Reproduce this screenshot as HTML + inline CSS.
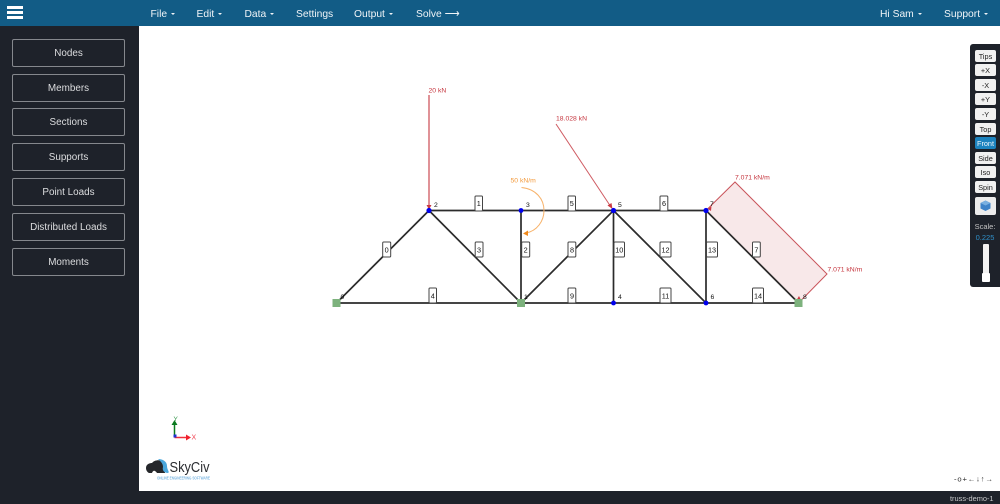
<!DOCTYPE html>
<html><head><meta charset="utf-8"><style>
html,body{margin:0;padding:0;width:1000px;height:504px;overflow:hidden;background:#fff;font-family:"Liberation Sans",sans-serif}
#wrap{position:absolute;left:0;top:0;width:1000px;height:504px;overflow:hidden;filter:blur(.3px)}
.a{position:absolute}
#top{left:0;top:0;width:1000px;height:26px;background:#125c86}
#side{left:0;top:26px;width:138.5px;height:478px;background:#1e222a}
#bot{left:0;top:491px;width:1000px;height:13px;background:#1e222a}
.bar{left:7px;width:16px;height:3px;background:#fff}
.m{top:7.8px;color:#f0f4f7;font-size:10.3px;line-height:13px;white-space:nowrap}
.c{display:inline-block;margin-left:4px;vertical-align:2px;border-left:2px solid transparent;border-right:2px solid transparent;border-top:2px solid #f0f4f7}
.b{left:12px;width:111px;height:26px;border:1px solid #85888d;border-radius:2px;color:#dcdddf;font-size:9.9px;line-height:27.5px;text-align:center}
#panel{left:970px;top:44px;width:30px;height:243px;background:#1e222a;border-radius:3px 0 0 3px}
.v{left:975px;width:21px;height:12px;background:#f1f1f1;border-radius:2px;color:#222;font-size:7.3px;line-height:13.5px;text-align:center}
svg{position:absolute;left:0;top:0}
</style></head><body><div id="wrap">
<div class="a" id="top"></div>
<div class="a bar" style="top:5.5px"></div><div class="a bar" style="top:11px"></div><div class="a bar" style="top:16px"></div>
<div class="a m" style="left:150.5px">File<span class="c"></span></div>
<div class="a m" style="left:196.5px">Edit<span class="c"></span></div>
<div class="a m" style="left:244.5px">Data<span class="c"></span></div>
<div class="a m" style="left:296px">Settings</div>
<div class="a m" style="left:354px">Output<span class="c"></span></div>
<div class="a m" style="left:416px">Solve ⟶</div>
<div class="a m" style="left:880px">Hi Sam<span class="c"></span></div>
<div class="a m" style="left:944px">Support<span class="c"></span></div>

<div class="a" id="side"></div>
<div class="a b" style="top:38.5px">Nodes</div>
<div class="a b" style="top:73.5px">Members</div>
<div class="a b" style="top:108px">Sections</div>
<div class="a b" style="top:143px">Supports</div>
<div class="a b" style="top:178px">Point Loads</div>
<div class="a b" style="top:212.5px">Distributed Loads</div>
<div class="a b" style="top:247.5px">Moments</div>
<div class="a" id="bot"></div>
<div class="a" style="left:950px;top:494px;color:#c8c9cb;font-size:7.4px;line-height:9px">truss-demo-1</div>

<svg width="1000" height="504" viewBox="0 0 1000 504" font-family="Liberation Sans, sans-serif">
<polygon points="706,210.5 735,182 827,274 798.5,303" fill="#c8404a" fill-opacity=".12" stroke="#c9545b" stroke-width="1"/>
<g stroke="#2b2b2b" stroke-width="1.7" fill="none">
<path d="M336.5 303L429 210.5L521 303M336.5 303H798.5M429 210.5H706M521 210.5V303M521 303L613.5 210.5V303M613.5 210.5L706 303M706 210.5V303M706 210.5L798.5 303"/>
</g>
<path d="M429 95V207" stroke="#d9777d" stroke-width="1.6" fill="none"/>
<path d="M426.5 205L429 209.5L431.5 205Z" fill="#c93a42"/>
<path d="M556 124L611 207" stroke="#cf5b62" stroke-width="1" fill="none"/>
<path d="M607.5 205.5L612.5 209L611.5 203Z" fill="#c93a42"/>
<path d="M708 209L711.5 206L711 211Z M796 301L801 300L799 296Z" fill="#c93a42"/>
<path d="M521.5 187.5C536 189 544 199 544 210.5C544 221 537 231 526 233" stroke="#f7b26a" stroke-width="1" fill="none"/>
<path d="M523 233.5L528 230.5L528 236Z" fill="#f08a1d"/>
<g fill="#0000ee">
<circle cx="429" cy="210.5" r="2.6"/><circle cx="521" cy="210.5" r="2.4"/><circle cx="613.5" cy="210.5" r="2.6"/><circle cx="706" cy="210.5" r="2.6"/><circle cx="613.5" cy="303" r="2.4"/><circle cx="706" cy="303" r="2.4"/>
</g>
<g fill="#7db27d">
<rect x="332.5" y="299" width="8" height="8"/><rect x="517" y="299" width="8" height="8"/><rect x="794.5" y="299" width="8" height="8"/>
</g>
<g fill="#fff" stroke="#444" stroke-width="1">
<rect x="382.7" y="242" width="8" height="15" rx="1"/><rect x="475" y="196" width="7.5" height="15" rx="1"/>
<rect x="521.7" y="242" width="8" height="15" rx="1"/><rect x="475.2" y="242" width="7.8" height="15" rx="1"/>
<rect x="429" y="288" width="7.5" height="15" rx="1"/><rect x="568" y="196" width="7.5" height="15" rx="1"/>
<rect x="660" y="196" width="7.8" height="15" rx="1"/><rect x="752.5" y="242" width="7.8" height="15" rx="1"/>
<rect x="568" y="242" width="7.8" height="15" rx="1"/><rect x="568" y="288" width="7.8" height="15" rx="1"/>
<rect x="614" y="242" width="10.5" height="15" rx="1"/><rect x="660" y="288" width="11" height="15" rx="1"/>
<rect x="660" y="242" width="11" height="15" rx="1"/><rect x="706.5" y="242" width="11" height="15" rx="1"/>
<rect x="752.5" y="288" width="11" height="15" rx="1"/>
</g>
<g font-size="7.3" fill="#111" text-anchor="middle">
<text x="386.7" y="252.5">0</text><text x="478.8" y="206">1</text><text x="525.7" y="252.5">2</text><text x="479" y="252.5">3</text>
<text x="432.8" y="298.5">4</text><text x="571.8" y="206">5</text><text x="664" y="206">6</text><text x="756.4" y="252.5">7</text>
<text x="572" y="252.5">8</text><text x="572" y="298.5">9</text><text x="619.3" y="252.5">10</text><text x="665.5" y="298.5">11</text>
<text x="665.5" y="252.5">12</text><text x="712" y="252.5">13</text><text x="758" y="298.5">14</text>
</g>
<g font-size="6.8" fill="#111">
<text x="340.5" y="299">0</text><text x="434" y="207">2</text><text x="526" y="207">3</text><text x="618" y="207">5</text><text x="618" y="299">4</text><text x="710.5" y="299">6</text><text x="710" y="206">7</text><text x="803" y="299">8</text><text x="524" y="299">1</text>
</g>
<g font-size="6.8" fill="#c5343d">
<text x="428.5" y="92.5">20 kN</text><text x="556" y="120.5">18.028 kN</text><text x="735" y="179.5">7.071 kN/m</text><text x="827.5" y="271.5">7.071 kN/m</text>
</g>
<text x="510.5" y="182.5" font-size="6.8" fill="#f39a3c">50 kN/m</text>

<path d="M174.5 437V424" stroke="#0a7a1e" stroke-width="1.5"/><path d="M171.5 425L174.5 420L177.5 425Z" fill="#0a7a1e"/>
<path d="M174.5 437.5H188" stroke="#f0303c" stroke-width="1.5"/><path d="M186 434.5L191 437.5L186 440.5Z" fill="#f0202c"/>
<rect x="173.5" y="434.5" width="3" height="3" fill="#2030d0"/>
<text x="173.5" y="421" font-size="6.5" fill="#3a9a50">Y</text>
<text x="191.5" y="439.5" font-size="7" fill="#f04050">X</text>

<path d="M146 468C146 464 150 463 152 463C154 460 160 459 164 462L165 473H157C155 470 153 470 152 473H149C147 472 146 470 146 468Z" fill="#25272b"/>
<path d="M158 459C162 459 167 461 167 466C167 470 170 472 168 473C164 473 162 470 163 467C163 463 160 461 158 459Z" fill="#4aa7dd"/>
<text x="169.5" y="472" font-size="14.5" fill="#2b2d31" textLength="40" lengthAdjust="spacingAndGlyphs">SkyCiv</text>
<text x="157" y="479.5" font-size="4.6" font-weight="bold" fill="#7fb8e2" textLength="53" lengthAdjust="spacingAndGlyphs">ONLINE ENGINEERING SOFTWARE</text>
<text x="954" y="481.5" font-size="7.6" fill="#333" textLength="39" lengthAdjust="spacing">- o + ← ↓ ↑ →</text>
</svg>

<div class="a" id="panel"></div>
<div class="a v" style="top:49.5px">Tips</div>
<div class="a v" style="top:64px">+X</div>
<div class="a v" style="top:78.5px">-X</div>
<div class="a v" style="top:93px">+Y</div>
<div class="a v" style="top:107.5px">-Y</div>
<div class="a v" style="top:122.5px">Top</div>
<div class="a v" style="top:137px;background:#1c83bf;color:#eef6fb">Front</div>
<div class="a v" style="top:151.5px">Side</div>
<div class="a v" style="top:166px">Iso</div>
<div class="a v" style="top:180.5px">Spin</div>
<div class="a" style="left:975px;top:197px;width:21px;height:18px;background:#ececec;border-radius:2px"></div>
<svg width="1000" height="504" viewBox="0 0 1000 504"><path d="M985.5 200.5L990.5 203V208.5L985.5 211L980.5 208.5V203Z" fill="#3f83c8"/><path d="M985.5 200.5L990.5 203L985.5 205.5L980.5 203Z" fill="#7ab0e0"/></svg>
<div class="a" style="left:970px;top:222px;width:30px;text-align:center;color:#c4c4c4;font-size:7.5px;line-height:9px">Scale:</div>
<div class="a" style="left:970px;top:233px;width:30px;text-align:center;color:#2f8fc8;font-size:7.5px;line-height:9px">0.225</div>
<div class="a" style="left:982.5px;top:244px;width:6px;height:38px;background:#f2f2f2;border-radius:1px"></div>
<div class="a" style="left:981.5px;top:273px;width:8px;height:9px;background:#fff;border-radius:1px"></div>
</div></body></html>
